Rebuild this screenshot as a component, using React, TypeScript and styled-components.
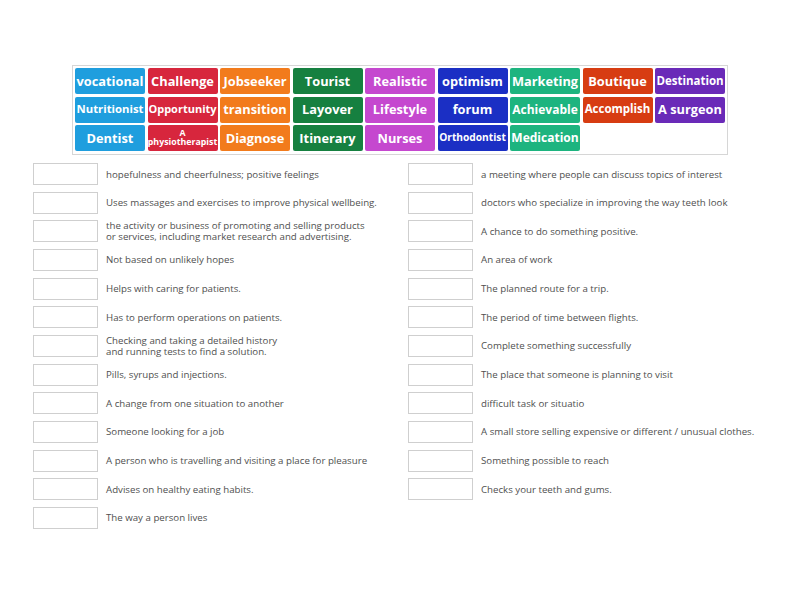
import React from "react";
import styled, { createGlobalStyle } from "styled-components";

const Global = createGlobalStyle`
  html, body { margin: 0; padding: 0; background: #ffffff; }
  body { font-family: "Open Sans", "Liberation Sans", sans-serif; }
`;

const Page = styled.div`
  width: 800px;
  height: 600px;
  padding-top: 65px;
  box-sizing: border-box;
  display: flex;
  flex-direction: column;
`;

const Bank = styled.div`
  margin-left: 72px;
  width: 656px;
  box-sizing: border-box;
  border: 1px solid #d6d6d6;
  padding: 2px 2px 3px 2px;
  display: grid;
  grid-template-columns: repeat(9, 70px);
  grid-auto-rows: 26px;
  column-gap: 2.5px;
  row-gap: 2.5px;
`;

const Tile = styled.div<{ $bg: string; $size?: number; $wrap?: boolean }>`
  background: ${(p) => p.$bg};
  color: #ffffff;
  border-radius: 2px;
  display: flex;
  align-items: center;
  justify-content: center;
  text-align: center;
  font-weight: 700;
  font-size: ${(p) => p.$size ?? 12.8}px;
  line-height: ${(p) => (p.$wrap ? 1.05 : 1.1)};
  white-space: ${(p) => (p.$wrap ? "pre" : "nowrap")};
  overflow: hidden;
`;

const Lists = styled.div`
  margin-top: 8px;
  padding-left: 33px;
  display: grid;
  grid-template-columns: 375px 375px;
`;

const Column = styled.div`
  display: flex;
  flex-direction: column;
  gap: 6.67px;
`;

const Row = styled.div`
  display: flex;
  align-items: center;
  height: 22px;
  gap: 8px;
`;

const Box = styled.div`
  flex: 0 0 auto;
  width: 65px;
  height: 22px;
  box-sizing: border-box;
  border: 1px solid #cfcfcf;
  background: #fff;
`;

const Clue = styled.div`
  font-size: 9.7px;
  line-height: 11px;
  color: #4f4f4f;
  white-space: pre;
`;

const B = "#1f9ede";
const R = "#d7263d";
const O = "#f27b1c";
const G = "#168040";
const M = "#c548cf";
const D = "#1b2fc4";
const T = "#1db47f";
const X = "#d73c12";
const P = "#6a2ab8";

const tiles: { t: string; c: string; s?: number }[] = [
  { t: "vocational", c: B },
  { t: "Challenge", c: R },
  { t: "Jobseeker", c: O },
  { t: "Tourist", c: G },
  { t: "Realistic", c: M },
  { t: "optimism", c: D },
  { t: "Marketing", c: T },
  { t: "Boutique", c: X },
  { t: "Destination", c: P, s: 11.5 },
  { t: "Nutritionist", c: B, s: 11.3 },
  { t: "Opportunity", c: R, s: 11 },
  { t: "transition", c: O },
  { t: "Layover", c: G },
  { t: "Lifestyle", c: M },
  { t: "forum", c: D },
  { t: "Achievable", c: T, s: 12 },
  { t: "Accomplish", c: X, s: 11.5 },
  { t: "A surgeon", c: P },
  { t: "Dentist", c: B },
  { t: "A\nphysiotherapist", c: R, s: 8.8 },
  { t: "Diagnose", c: O },
  { t: "Itinerary", c: G },
  { t: "Nurses", c: M },
  { t: "Orthodontist", c: D, s: 10.2 },
  { t: "Medication", c: T, s: 12 },
];

const left = [
  "hopefulness and cheerfulness; positive feelings",
  "Uses massages and exercises to improve physical wellbeing.",
  "the activity or business of promoting and selling products\nor services, including market research and advertising.",
  "Not based on unlikely hopes",
  "Helps with caring for patients.",
  "Has to perform operations on patients.",
  "Checking and taking a detailed history\nand running tests to find a solution.",
  "Pills, syrups and injections.",
  "A change from one situation to another",
  "Someone looking for a job",
  "A person who is travelling and visiting a place for pleasure",
  "Advises on healthy eating habits.",
  "The way a person lives",
];

const right = [
  "a meeting where people can discuss topics of interest",
  "doctors who specialize in improving the way teeth look",
  "A chance to do something positive.",
  "An area of work",
  "The planned route for a trip.",
  "The period of time between flights.",
  "Complete something successfully",
  "The place that someone is planning to visit",
  "difficult task or situatio",
  "A small store selling expensive or different / unusual clothes.",
  "Something possible to reach",
  "Checks your teeth and gums.",
];

export default function App() {
  return (
    <Page>
      <Global />
      <Bank>
        {tiles.map((x, i) => (
          <Tile key={i} $bg={x.c} $size={x.s} $wrap={x.t.includes("\n")}>
            {x.t}
          </Tile>
        ))}
      </Bank>
      <Lists>
        <Column>
          {left.map((t, i) => (
            <Row key={i}>
              <Box />
              <Clue>{t}</Clue>
            </Row>
          ))}
        </Column>
        <Column>
          {right.map((t, i) => (
            <Row key={i}>
              <Box />
              <Clue>{t}</Clue>
            </Row>
          ))}
        </Column>
      </Lists>
    </Page>
  );
}
